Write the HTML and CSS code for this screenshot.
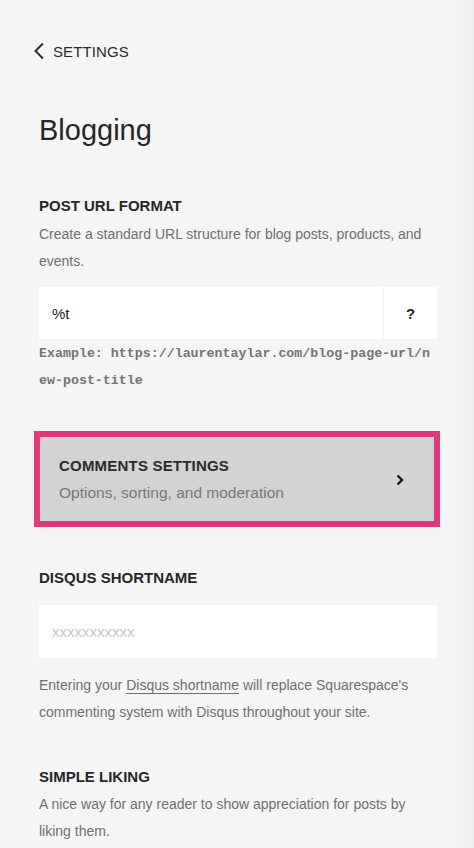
FILE: index.html
```html
<!DOCTYPE html>
<html>
<head>
<meta charset="utf-8">
<link rel="stylesheet" href="styles.css">
</head>
<body>
<div class="panel">
  <div class="back">
    <svg class="back-icon" width="12" height="18" viewBox="0 0 12 18"><path d="M10 1.5 L2.5 9 L10 16.5" fill="none" stroke="#2b2b2b" stroke-width="2"/></svg>
    <span>SETTINGS</span>
  </div>
  <h1 class="title">Blogging</h1>

  <section class="field field-url">
    <h2 class="label">POST URL FORMAT</h2>
    <p class="desc desc-url">Create a standard URL structure for blog posts, products, and events.</p>
    <div class="input-row">
      <div class="input-val">%t</div>
      <div class="input-help">?</div>
    </div>
    <p class="example">Example: https://laurentaylar.com/blog-page-url/new-post-title</p>
  </section>

  <div class="nav-item">
    <div class="nav-text">
      <div class="nav-title">COMMENTS SETTINGS</div>
      <div class="nav-sub">Options, sorting, and moderation</div>
    </div>
    <svg class="nav-chevron" width="8" height="12" viewBox="0 0 8 12"><path d="M1.5 1.5 L6 6 L1.5 10.5" fill="none" stroke="#111" stroke-width="2.4"/></svg>
  </div>

  <section class="field field-disqus">
    <h2 class="label">DISQUS SHORTNAME</h2>
    <div class="input-box"><span class="placeholder">xxxxxxxxxxx</span></div>
    <p class="desc desc-after">Entering your <span class="link">Disqus shortname</span> will replace Squarespace's commenting system with Disqus throughout your site.</p>
  </section>

  <section class="field field-liking">
    <h2 class="label">SIMPLE LIKING</h2>
    <p class="desc desc-liking">A nice way for any reader to show appreciation for posts by liking them.</p>
  </section>
</div>
</body>
</html>
```

FILE: styles.css
```css
html, body {
  margin: 0;
  padding: 0;
}
body {
  background: linear-gradient(to right, #f5f5f5 0, #f5f5f5 445px, #eeeeee 474px);
  font-family: "Liberation Sans", Arial, sans-serif;
  color: #2b2b2b;
  height: 848px;
  overflow: hidden;
}
.panel {
  padding: 42px 37px 0 39px;
}
.back {
  display: flex;
  align-items: center;
  gap: 8px;
  margin-left: -6px;
  height: 18px;
}
.back span {
  font-size: 15px;
  letter-spacing: 0.1px;
  font-weight: 500;
  color: #2b2b2b;
}
.title {
  margin: 52px 0 0;
  font-size: 29px;
  font-weight: 500;
  line-height: 36px;
  color: #262626;
}
.field {
  margin-top: 45px;
}
.field-url {
  margin-top: 48px;
}
.label {
  margin: 0;
  font-size: 15px;
  font-weight: 600;
  letter-spacing: 0;
  line-height: 20px;
  color: #262626;
}
.desc {
  margin: 6px 0 0;
  font-size: 14px;
  line-height: 26.5px;
  color: #6f6f6f;
}
.desc-url {
  margin-top: 5px;
}
.input-row {
  display: flex;
  margin-top: 13px;
  height: 52px;
  background: #fff;
}
.input-val {
  flex: 1;
  display: flex;
  align-items: center;
  padding-left: 13px;
  font-size: 15px;
  color: #222;
  border-right: 1px solid #eeeeee;
}
.input-help {
  width: 53px;
  display: flex;
  align-items: center;
  justify-content: center;
  font-size: 15px;
  font-weight: 700;
  color: #222;
}
.example {
  margin: 2px 0 0;
  font-family: "Liberation Mono", "Courier New", monospace;
  font-size: 13.3px;
  line-height: 26.5px;
  color: #747474;
  word-break: break-all;
  font-weight: 700;
}
.nav-item {
  margin: 37px -3px 0 -5px;
  border: 6px solid #e0397b;
  background: #d3d3d3;
  display: flex;
  align-items: center;
  padding: 19px 30px 18px 19px;
}
.nav-text {
  flex: 1;
}
.nav-title {
  font-size: 15px;
  font-weight: 600;
  letter-spacing: 0.2px;
  line-height: 20px;
  color: #2b2b2b;
}
.nav-sub {
  margin-top: 7px;
  font-size: 15.5px;
  line-height: 20px;
  color: #777;
}
.nav-chevron {
  display: block;
}
.field-disqus {
  margin-top: 41px;
}
.input-box {
  margin-top: 17px;
  height: 53px;
  background: #fff;
  display: flex;
  align-items: center;
  padding-left: 13px;
}
.placeholder {
  font-size: 15px;
  color: #c8c8c8;
}
.desc-after {
  margin-top: 14px;
}
.link {
  color: #6f6f6f;
  text-decoration: underline;
  text-underline-offset: 3px;
  text-decoration-thickness: 1px;
}
.field-liking {
  margin-top: 42px;
}
.desc-liking {
  margin-top: 4px;
}
```
